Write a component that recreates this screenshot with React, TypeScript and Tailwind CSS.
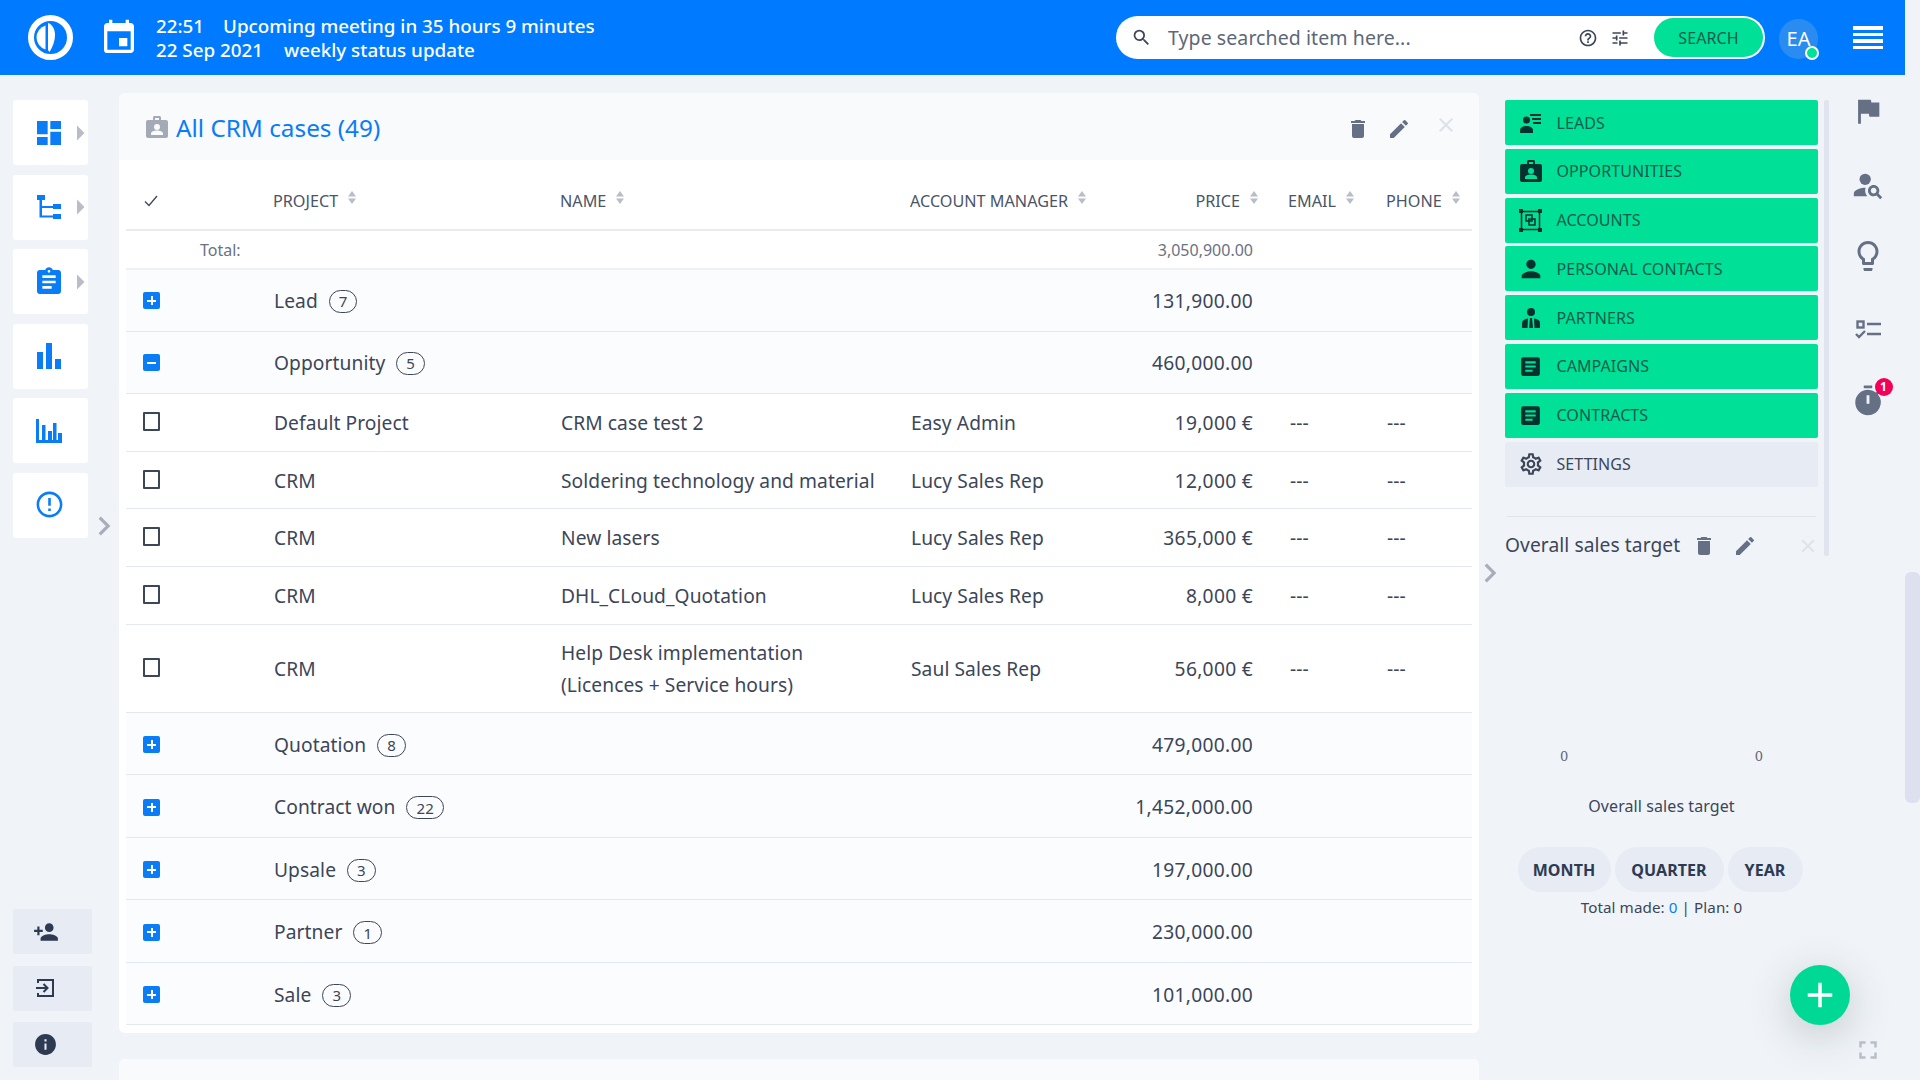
import React from "react";
import {
  MdDashboard, MdAssignment, MdErrorOutline, MdPersonAdd, MdInfo,
  MdEvent, MdSearch, MdHelpOutline, MdTune, MdDelete, MdEdit, MdClose, MdPerson, MdArticle,
  MdOutlineSettings, MdFlag, MdPersonSearch, MdLightbulbOutline, MdTimer, MdAdd, MdFullscreen,
  MdChevronRight, MdArrowRight,
} from "react-icons/md";

const cols = "grid grid-cols-[148px_287px_350px_342px_134px_85px] items-center";

function Logo() {
  return (
    <svg width="45" height="45" viewBox="0 0 45 45" fill="white">
      <circle cx="22.5" cy="22.5" r="19.5" fill="none" stroke="white" strokeWidth="6" />
      <path d="M17.500 10.500 A12.500 12.500 0 0 0 17.500 34.500 Z" />
      <path d="M20 8 C24 9 27 14 27 20 C27 26 25 31 21.500 37 L20 35 Z" />
    </svg>
  );
}

function TreeIcon() {
  return (
    <svg width="24" height="24" viewBox="0 0 24 24" fill="#0a7cf5">
      <rect x="0" y="0" width="8" height="5" />
      <rect x="16" y="9" width="8" height="5" />
      <rect x="16" y="19" width="8" height="5" />
      <path d="M2.500 5h2.500v6h11v2h-11v7.500h11v2h-13.500z" />
    </svg>
  );
}

function BarsIcon() {
  return (
    <svg width="24" height="26" viewBox="0 0 24 26" fill="#0a7cf5">
      <rect x="0" y="9" width="6" height="17" />
      <rect x="9" y="0" width="6" height="26" />
      <rect x="18" y="16" width="6" height="10" />
    </svg>
  );
}

function AxisChart() {
  return (
    <svg width="26" height="24" viewBox="0 0 26 24" fill="#0a7cf5">
      <rect x="0" y="0" width="3" height="24" />
      <rect x="0" y="21" width="26" height="3" />
      <rect x="6" y="6" width="3.500" height="16" />
      <rect x="12" y="12" width="4" height="10" />
      <rect x="17" y="4" width="3.500" height="18" />
      <rect x="22" y="14" width="4" height="8" />
    </svg>
  );
}

function LoginIcon() {
  return (
    <svg width="18" height="18" viewBox="0 0 18 18" fill="none" stroke="#2d3a52" strokeWidth="2">
      <path d="M2 4V1h15v16H2v-3" />
      <path d="M0 9h11M7.500 5l4 4-4 4" />
    </svg>
  );
}

function LeadsIcon() {
  return (
    <svg width="22" height="20" viewBox="0 0 22 20" fill="#04332f">
      <circle cx="6.500" cy="7" r="3.500" />
      <path d="M0 20v-2.500c0-3 3-4.500 6.500-4.500s6.500 1.500 6.500 4.500V20z" />
      <rect x="10" y="1" width="11" height="2" />
      <rect x="12" y="5" width="9" height="2" />
      <rect x="13" y="9" width="8" height="2" />
    </svg>
  );
}

function BadgeIcon({ color = "#04332f", size = 22 }: { color?: string; size?: number }) {
  return (
    <svg width={size} height={size} viewBox="0 0 22 22" fill={color}>
      <path
        fillRule="evenodd"
        d="M7 4V1.500C7 .7 7.700 0 8.500 0h5c.8 0 1.500.7 1.500 1.500V4h5c1.100 0 2 .9 2 2v14c0 1.100-.9 2-2 2H2c-1.100 0-2-.9-2-2V6c0-1.100.9-2 2-2zm2 0h4V2H9zm2 4a3 3 0 1 0 0 6 3 3 0 0 0 0-6zM5 19h12v-1.500c0-2-3-3-6-3s-6 1-6 3z"
      />
    </svg>
  );
}

function AccountsIcon() {
  return (
    <svg width="23" height="23" viewBox="0 0 23 23" fill="none" stroke="#04332f" strokeWidth="1.500">
      <rect x="2.500" y="2.500" width="18" height="18" />
      <rect x="7" y="6" width="6" height="6" />
      <rect x="10" y="10" width="6" height="6" />
      <g fill="#04332f" stroke="none">
        <rect x="0" y="0" width="4" height="4" />
        <rect x="19" y="0" width="4" height="4" />
        <rect x="0" y="19" width="4" height="4" />
        <rect x="19" y="19" width="4" height="4" />
      </g>
    </svg>
  );
}

function PartnerIcon() {
  return (
    <svg width="18" height="20" viewBox="0 0 18 20" fill="#04332f">
      <circle cx="9" cy="4" r="4" />
      <path d="M8 10 L10 10 L11 20 H7z" />
      <path d="M0 20v-5c0-2.500 2-4 6-4.500L5.500 20z" />
      <path d="M18 20v-5c0-2.500-2-4-6-4.500l.5 9.500z" />
    </svg>
  );
}

function ChecklistIcon() {
  return (
    <svg width="26" height="20" viewBox="0 0 26 20" fill="none" stroke="#667085" strokeWidth="2.400">
      <rect x="2.500" y="1.500" width="6" height="6" />
      <path d="M12 4h14M1 14l3 3 6-6M12 14h14" />
    </svg>
  );
}

function SortArrows() {
  return (
    <svg width="8" height="13" viewBox="0 0 8 13" fill="#b8bec8" className="mb-[6px] ml-[10px] shrink-0">
      <path d="M4 0L8 5.500H0z" />
      <path d="M4 13L0 7.500h8z" />
    </svg>
  );
}

function Tile({ children, arrow }: { children: React.ReactNode; arrow?: boolean }) {
  return (
    <div className="w-[75px] h-[65px] bg-white rounded-[3px] flex items-center relative">
      <div className="w-[72px] shrink-0 flex justify-center">{children}</div>
      {arrow && <MdArrowRight size={36} className="text-[#b9bdc7] -ml-[23px] shrink-0" />}
    </div>
  );
}

function BottomTile({ children }: { children: React.ReactNode }) {
  return (
    <div className="w-[79px] h-[45px] bg-[#e6ebf4] rounded-[2px] flex items-center pl-[20px] text-[#2d3a52]">{children}</div>
  );
}

function Expander({ open }: { open?: boolean }) {
  return (
    <div className="w-[17px] h-[17px] ml-[17px] bg-[#0a7cf5] rounded-[2px] flex items-center justify-center">
      <div className="relative w-[9px] h-[2px] bg-white">
        {!open && <div className="absolute left-[3.500px] -top-[3.500px] w-[2px] h-[9px] bg-white" />}
      </div>
    </div>
  );
}

function GroupRow({ label, count, price, height, open }: { label: string; count: number; price: string; height: string; open?: boolean }) {
  return (
    <div className={`${cols} ${height} bg-[#fbfcfd] border-b border-[#e4e8ef]`}>
      <Expander open={open} />
      <div className="col-span-2 flex items-center gap-[11px] mt-px">
        <span>{label}</span>
        <span className="min-w-[28px] px-[9px] h-[23px] border border-[#3c4658] rounded-full flex items-center justify-center text-[15px] mt-px">{count}</span>
      </div>
      <div className="text-right tracking-[0.3px] mt-px">{price}</div>
    </div>
  );
}

function CaseRow({ project, name, manager, price, height }: { project: string; name: React.ReactNode; manager: string; price: string; height: string }) {
  return (
    <div className={`${cols} ${height} border-b border-[#e4e8ef]`}>
      <div className="w-[17px] h-[19px] ml-[17px] -mt-[3px] border-2 border-[#3c4658] rounded-[1px]" />
      <div className="mt-px">{project}</div>
      <div className="leading-[32px]">{name}</div>
      <div className="flex mt-px">
        <span className="w-[229px]">{manager}</span>
        <span className="flex-1 text-right tracking-[0.3px]">{price}</span>
      </div>
      <div className="pl-[37px] mt-px">---</div>
      <div className="mt-px">---</div>
    </div>
  );
}

function SideLink({ icon, label, settings }: { icon: React.ReactNode; label: string; settings?: boolean }) {
  return (
    <div className={`h-[45px] rounded-[2px] flex items-center text-[16px] ${settings ? "bg-[#e6ebf4] text-[#3c4658]" : "bg-[#00e096] text-[#0d5c4c]"}`}>
      <div className="w-[51.500px] flex justify-center">{icon}</div>
      <span>{label}</span>
    </div>
  );
}

function HeadCell({ children, className }: { children: React.ReactNode; className?: string }) {
  return (
    <div className={`flex items-center ${className ?? ""}`}>
      <span>{children}</span>
      <SortArrows />
    </div>
  );
}

export default function App() {
  return (
    <div className="h-[1080px] w-[1920px] overflow-hidden flex bg-[#f0f4f8] text-[#3c4658] font-['Noto_Sans',sans-serif] text-[19.2px] tracking-[0.08px]">
      <div className="w-[1905px] shrink-0 flex flex-col">
        <header className="h-[75px] bg-[#007bff] flex items-center text-white shrink-0">
          <div className="ml-[28px] w-[45px]"><Logo /></div>
          <MdEvent size={40} className="ml-[26px]" />
          <div className="ml-[17px] mt-[1px] text-[18.8px] tracking-normal leading-[24px] font-medium">
            <div>22:51<span className="ml-[19px]">Upcoming meeting in 35 hours 9 minutes</span></div>
            <div>22 Sep 2021<span className="ml-[21px]">weekly status update</span></div>
          </div>
          <div className="ml-auto mr-[14px] w-[649px] h-[43px] bg-white rounded-full flex items-center pr-[2px]">
            <MdSearch size={21} className="ml-[15px] text-[#3c4658]" />
            <span className="ml-[16px] text-[#5e6778] text-[19.5px]">Type searched item here...</span>
            <MdHelpOutline size={20} className="ml-auto text-[#3c4658]" />
            <MdTune size={20} className="ml-[12px] text-[#3c4658]" />
            <div className="ml-[24px] w-[109px] h-[39px] rounded-full bg-[#00e096] text-[#0d5c4c] flex items-center justify-center text-[16px]">SEARCH</div>
          </div>
          <div className="relative w-[39px] h-[40px] rounded-full bg-[#2a8bf0] flex items-center justify-center text-[20px] mt-[2px]">
            EA
            <div className="absolute -right-[1px] -bottom-[1px] w-[14px] h-[14px] rounded-full bg-[#00e096] border-2 border-white" />
          </div>
          <div className="ml-[35px] mr-[22px] w-[30px] flex flex-col gap-[3px]">
            <div className="h-[3.500px] bg-white" />
            <div className="h-[3.500px] bg-white" />
            <div className="h-[3.500px] bg-white" />
            <div className="h-[3.500px] bg-white" />
          </div>
        </header>

        <div className="flex flex-1 min-h-0">
          <aside className="w-[119px] shrink-0 pl-[13px] pt-[25px] pb-[13px] flex flex-col">
            <div className="flex flex-col gap-[9.500px]">
              <Tile arrow><MdDashboard size={32} className="text-[#0a7cf5]" /></Tile>
              <Tile arrow><TreeIcon /></Tile>
              <Tile arrow><MdAssignment size={32} className="text-[#0a7cf5]" /></Tile>
              <Tile><BarsIcon /></Tile>
              <Tile><AxisChart /></Tile>
              <Tile><MdErrorOutline size={31} className="text-[#0a7cf5] -mt-[2px]" /></Tile>
            </div>
            <MdChevronRight size={38} className="ml-[72px] -mt-[31px] text-[#a9adba]" />
            <div className="mt-auto flex flex-col gap-[11.500px]">
              <BottomTile><MdPersonAdd size={26} /></BottomTile>
              <BottomTile><div className="ml-[3px]"><LoginIcon /></div></BottomTile>
              <BottomTile><MdInfo size={25} /></BottomTile>
            </div>
          </aside>

          <main className="w-[1360px] shrink-0 pt-[18px] overflow-hidden">
            <section className="h-[940px] bg-white rounded-[6px]">
              <div className="h-[67px] bg-[#f8fafc] rounded-t-[6px] flex items-center pl-[27px]">
                <BadgeIcon color="#a3aab6" size={22} />
                <span className="ml-[8px] mt-[3px] text-[24.3px] text-[#0a7cf5] tracking-normal">All CRM cases (49)</span>
                <MdDelete size={24} className="ml-auto mt-[4px] text-[#667085]" />
                <MdEdit size={24} className="ml-[17px] mt-[4px] text-[#667085]" />
                <MdClose size={24} className="ml-[23px] mr-[21px] -mt-[4px] text-[#dde2ea]" />
              </div>
              <div className="mx-[7px]">
                <div className={`${cols} h-[71px] pt-[13px] border-b-2 border-[#e8ebf0] text-[16.2px] text-[#4a5568] tracking-normal`}>
                  <svg width="14" height="12" viewBox="0 0 14 12" fill="none" stroke="#3c4658" strokeWidth="1.300" className="ml-[18px]">
                    <path d="M1 6.500l4 4 8-9.500" />
                  </svg>
                  <HeadCell className="-ml-px">PROJECT</HeadCell>
                  <HeadCell className="-ml-px">NAME</HeadCell>
                  <div className="flex -mr-[5px]">
                    <HeadCell className="w-[229px] -ml-px">ACCOUNT MANAGER</HeadCell>
                    <HeadCell className="flex-1 justify-end">PRICE</HeadCell>
                  </div>
                  <HeadCell className="pl-[35px]">EMAIL</HeadCell>
                  <HeadCell className="-ml-px">PHONE</HeadCell>
                </div>
                <div className={`${cols} h-[39px] border-b-2 border-[#eef0f4] text-[16px] text-[#6b7280] tracking-normal`}>
                  <div className="pl-[74px]">Total:</div>
                  <div className="col-start-4 text-right">3,050,900.00</div>
                </div>
                <GroupRow label="Lead" count={7} price="131,900.00" height="h-[62px]" />
                <GroupRow label="Opportunity" count={5} price="460,000.00" height="h-[62px]" open />
                <CaseRow project="Default Project" name="CRM case test 2" manager="Easy Admin" price="19,000 €" height="h-[58px]" />
                <CaseRow project="CRM" name="Soldering technology and material" manager="Lucy Sales Rep" price="12,000 €" height="h-[57px] pt-[2px]" />
                <CaseRow project="CRM" name="New lasers" manager="Lucy Sales Rep" price="365,000 €" height="h-[58px]" />
                <CaseRow project="CRM" name="DHL_CLoud_Quotation" manager="Lucy Sales Rep" price="8,000 €" height="h-[58px]" />
                <CaseRow project="CRM" name={<>Help Desk implementation<br />(Licences + Service hours)</>} manager="Saul Sales Rep" price="56,000 €" height="h-[88px]" />
                <GroupRow label="Quotation" count={8} price="479,000.00" height="h-[62px] pt-[2px]" />
                <GroupRow label="Contract won" count={22} price="1,452,000.00" height="h-[63px] pt-[2px]" />
                <GroupRow label="Upsale" count={3} price="197,000.00" height="h-[62px] pt-[2px]" />
                <GroupRow label="Partner" count={1} price="230,000.00" height="h-[63px] pt-[2px]" />
                <GroupRow label="Sale" count={3} price="101,000.00" height="h-[62px] pt-[2px]" />
              </div>
            </section>
            <section className="mt-[26px] h-[60px] bg-white rounded-t-[6px]">
              <div className="h-full bg-[#f8fafc] rounded-t-[6px]" />
            </section>
          </main>

          <div className="relative w-[351px] shrink-0 pl-[26px] pt-[25px]">
            <MdChevronRight size={38} className="absolute left-[-8px] top-[479px] text-[#a9adba]" />
            <div className="flex">
              <div className="w-[313px]">
                <div className="flex flex-col gap-[3.800px]">
                  <SideLink icon={<LeadsIcon />} label="LEADS" />
                  <SideLink icon={<BadgeIcon />} label="OPPORTUNITIES" />
                  <SideLink icon={<AccountsIcon />} label="ACCOUNTS" />
                  <SideLink icon={<MdPerson size={28} className="text-[#04332f]" />} label="PERSONAL CONTACTS" />
                  <SideLink icon={<PartnerIcon />} label="PARTNERS" />
                  <SideLink icon={<MdArticle size={25} className="text-[#04332f]" />} label="CAMPAIGNS" />
                  <SideLink icon={<MdArticle size={25} className="text-[#04332f]" />} label="CONTRACTS" />
                  <SideLink icon={<MdOutlineSettings size={26} className="text-[#3c4658]" />} label="SETTINGS" settings />
                </div>
                <div className="mt-[29px] mx-[2px] border-t border-[#dfe4ee]" />
                <div className="mt-[14px] h-[30px] flex items-center">
                  <span className="text-[19.2px]">Overall sales target</span>
                  <MdDelete size={24} className="ml-[12px] text-[#667085]" />
                  <MdEdit size={24} className="ml-[17px] text-[#667085]" />
                  <MdClose size={22} className="ml-auto -mr-[1px] text-[#dde2ea]" />
                </div>
              </div>
              <div className="ml-[6px] w-[5px] h-[456px] bg-[#dfe4ee] rounded-[2px]" />
            </div>
            <div className="w-[313px] mt-[186px] flex justify-between px-[55px] text-[13px] text-[#5e6778] font-['DejaVu_Serif',serif]">
              <span>0</span>
              <span>0</span>
            </div>
            <div className="w-[313px] mt-[28px] text-center text-[16px]">Overall sales target</div>
            <div className="w-[313px] mt-[29px] flex justify-center gap-[4px] text-[16px] font-bold text-[#2d3a52] pr-[3px]">
              <div className="h-[45px] w-[93px] rounded-full bg-[#e6ebf4] flex items-center justify-center">MONTH</div>
              <div className="h-[45px] w-[109px] rounded-full bg-[#e6ebf4] flex items-center justify-center">QUARTER</div>
              <div className="h-[45px] w-[75px] rounded-full bg-[#e6ebf4] flex items-center justify-center">YEAR</div>
            </div>
            <div className="w-[313px] mt-[4px] text-center text-[15.2px]">
              Total made: <span className="text-[#0a7cf5]">0</span> | Plan: 0
            </div>
            <div className="absolute left-[311px] top-[890px] w-[60px] h-[60px] rounded-full bg-[#00d995] text-white flex items-center justify-center shadow-[0_10px_40px_rgba(60,70,90,0.25)]">
              <MdAdd size={42} />
            </div>
          </div>

          <div className="flex-1 flex flex-col items-center pt-[19px] text-[#667085] relative min-w-0">
            <MdFlag size={34} />
            <MdPersonSearch size={34} className="mt-[40px]" />
            <MdLightbulbOutline size={36} className="mt-[36px]" />
            <div className="mt-[46px]"><ChecklistIcon /></div>
            <div className="relative mt-[44px]">
              <MdTimer size={34} />
              <div className="absolute -right-[8px] -top-[6px] w-[18px] h-[18px] rounded-full bg-[#f50057] text-white text-[12px] font-bold flex items-center justify-center">1</div>
            </div>
            <MdFullscreen size={30} className="absolute bottom-[15px] text-[#b8bec8]" />
          </div>
        </div>
      </div>
      <div className="w-[15px] shrink-0 pt-[572px]">
        <div className="h-[231px] bg-[#dde0ee] rounded-[6px]" />
      </div>
    </div>
  );
}
